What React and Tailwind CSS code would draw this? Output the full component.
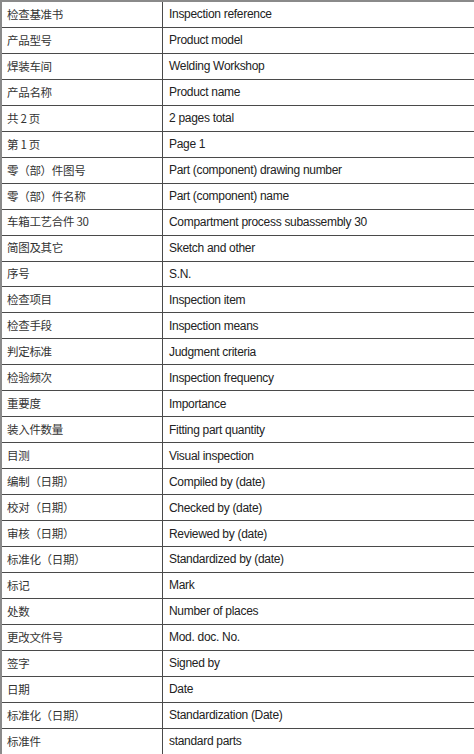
const rows = [
  ["检查基准书", "Inspection reference"],
  ["产品型号", "Product model"],
  ["焊装车间", "Welding Workshop"],
  ["产品名称", "Product name"],
  ["共 2 页", "2 pages total"],
  ["第 1 页", "Page 1"],
  ["零（部）件图号", "Part (component) drawing number"],
  ["零（部）件名称", "Part (component) name"],
  ["车箱工艺合件 30", "Compartment process subassembly 30"],
  ["简图及其它", "Sketch and other"],
  ["序号", "S.N."],
  ["检查项目", "Inspection item"],
  ["检查手段", "Inspection means"],
  ["判定标准", "Judgment criteria"],
  ["检验频次", "Inspection frequency"],
  ["重要度", "Importance"],
  ["装入件数量", "Fitting part quantity"],
  ["目测", "Visual inspection"],
  ["编制（日期）", "Compiled by (date)"],
  ["校对（日期）", "Checked by (date)"],
  ["审核（日期）", "Reviewed by (date)"],
  ["标准化（日期）", "Standardized by (date)"],
  ["标记", "Mark"],
  ["处数", "Number of places"],
  ["更改文件号", "Mod. doc. No."],
  ["签字", "Signed by"],
  ["日期", "Date"],
  ["标准化（日期）", "Standardization (Date)"],
  ["标准件", "standard parts"],
];

const App = () => {
  return (
    <div className="w-[474px] h-[754px] overflow-hidden bg-white">
      <div className="border-t-2 border-l-2 border-[#8a8a8a]">
        {rows.map(([zh, en], i) => (
          <div key={i} className="flex h-[25.96px] border-b border-[#4a4a4a]">
            <div className="w-[161px] shrink-0 flex items-center pl-[5px] border-r border-[#4a4a4a] text-[11.5px] tracking-[-0.3px] text-[#333] font-['Noto_Sans_CJK_SC',serif]">
              {zh}
            </div>
            <div className="flex-1 flex items-center pl-[6px] text-[12px] tracking-[-0.3px] text-[#222] font-['Liberation_Sans',Arial,sans-serif]">
              {en}
            </div>
          </div>
        ))}
      </div>
    </div>
  );
};

export default App;
